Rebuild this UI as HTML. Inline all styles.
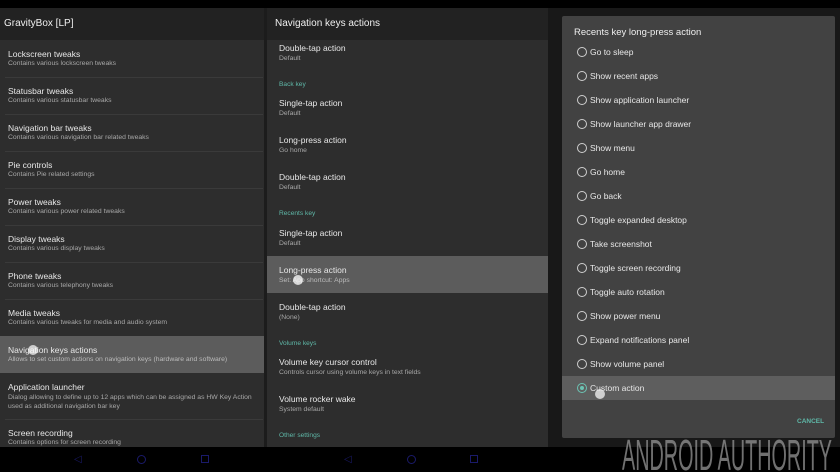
<!DOCTYPE html>
<html><head><meta charset="utf-8"><style>
*{margin:0;padding:0;box-sizing:border-box}
body{width:840px;height:472px;background:#000;position:relative;overflow:hidden;font-family:"Liberation Sans",sans-serif;color:#e6e6e6}
.a{position:absolute;white-space:nowrap}
.t{font-size:8.5px;color:#e8e8e8}
.s{font-size:6.8px;color:#a8a8a8}
.h{font-size:10px;color:#f0f0f0}
.c{font-size:6.6px;color:#5fb8a8}
.sep{position:absolute;height:1px;background:#3a3a3a}
.r{position:absolute;width:10px;height:10px;border:1.3px solid #cfcfcf;border-radius:50%}
.o{font-size:8.5px;color:#e8e8e8}
</style></head><body>
<div class="a" style="left:0;top:0;width:840px;height:8px;background:#000"></div>
<!-- panel 1 -->
<div class="a" style="left:0;top:8px;width:264px;height:32px;background:#222"></div>
<div class="a" style="left:0;top:40px;width:264px;height:407px;background:#2d2d2d"></div>
<div class="a" style="left:264px;top:8px;width:3px;height:439px;background:#1c1c1c"></div>
<div class="a h" style="left:4px;top:18px">GravityBox [LP]</div>
<div class="a" style="left:0;top:336px;width:264px;height:37px;background:#5c5c5c"></div>
<div class="a t" style="left:8px;top:49px">Lockscreen tweaks</div><div class="a s" style="left:8px;top:60px">Contains various lockscreen tweaks</div>
<div class="a t" style="left:8px;top:86px">Statusbar tweaks</div><div class="a s" style="left:8px;top:97px">Contains various statusbar tweaks</div>
<div class="a t" style="left:8px;top:123px">Navigation bar tweaks</div><div class="a s" style="left:8px;top:134px">Contains various navigation bar related tweaks</div>
<div class="a t" style="left:8px;top:160px">Pie controls</div><div class="a s" style="left:8px;top:171px">Contains Pie related settings</div>
<div class="a t" style="left:8px;top:197px">Power tweaks</div><div class="a s" style="left:8px;top:208px">Contains various power related tweaks</div>
<div class="a t" style="left:8px;top:234px">Display tweaks</div><div class="a s" style="left:8px;top:245px">Contains various display tweaks</div>
<div class="a t" style="left:8px;top:271px">Phone tweaks</div><div class="a s" style="left:8px;top:282px">Contains various telephony tweaks</div>
<div class="a t" style="left:8px;top:308px">Media tweaks</div><div class="a s" style="left:8px;top:319px">Contains various tweaks for media and audio system</div>
<div class="a t" style="left:8px;top:345px">Navigation keys actions</div><div class="a s" style="left:8px;top:356px;color:#bbb">Allows to set custom actions on navigation keys (hardware and software)</div>
<div class="a" style="left:28px;top:345px;width:10px;height:10px;border-radius:50%;background:rgba(255,255,255,.7)"></div>
<div class="a t" style="left:8px;top:382px">Application launcher</div><div class="a s" style="left:8px;top:393px;line-height:9px">Dialog allowing to define up to 12 apps which can be assigned as HW Key Action<br>used as additional navigation bar key</div>
<div class="a t" style="left:8px;top:428px">Screen recording</div><div class="a s" style="left:8px;top:439px">Contains options for screen recording</div>
<div class="sep" style="left:5px;top:77px;width:258px"></div><div class="sep" style="left:5px;top:114px;width:258px"></div><div class="sep" style="left:5px;top:151px;width:258px"></div><div class="sep" style="left:5px;top:188px;width:258px"></div><div class="sep" style="left:5px;top:225px;width:258px"></div><div class="sep" style="left:5px;top:262px;width:258px"></div><div class="sep" style="left:5px;top:299px;width:258px"></div><div class="sep" style="left:5px;top:419px;width:258px"></div>
<!-- panel 2 -->
<div class="a" style="left:267px;top:8px;width:281px;height:32px;background:#222"></div>
<div class="a" style="left:267px;top:40px;width:281px;height:407px;background:#2d2d2d"></div>
<div class="a h" style="left:275px;top:18px">Navigation keys actions</div>
<div class="a" style="left:267px;top:256px;width:281px;height:37px;background:#5c5c5c"></div>
<div class="a t" style="left:279px;top:43px">Double-tap action</div><div class="a s" style="left:279px;top:55px">Default</div>
<div class="a c" style="left:279px;top:81px">Back key</div>
<div class="a t" style="left:279px;top:98px">Single-tap action</div><div class="a s" style="left:279px;top:110px">Default</div>
<div class="a t" style="left:279px;top:135px">Long-press action</div><div class="a s" style="left:279px;top:147px">Go home</div>
<div class="a t" style="left:279px;top:172px">Double-tap action</div><div class="a s" style="left:279px;top:184px">Default</div>
<div class="a c" style="left:279px;top:210px">Recents key</div>
<div class="a t" style="left:279px;top:228px">Single-tap action</div><div class="a s" style="left:279px;top:240px">Default</div>
<div class="a t" style="left:279px;top:265px">Long-press action</div><div class="a s" style="left:279px;top:277px;color:#bbb">Set: App shortcut: Apps</div>
<div class="a" style="left:293px;top:275px;width:10px;height:10px;border-radius:50%;background:rgba(255,255,255,.75)"></div>
<div class="a t" style="left:279px;top:302px">Double-tap action</div><div class="a s" style="left:279px;top:314px">(None)</div>
<div class="a c" style="left:279px;top:340px">Volume keys</div>
<div class="a t" style="left:279px;top:357px">Volume key cursor control</div><div class="a s" style="left:279px;top:369px">Controls cursor using volume keys in text fields</div>
<div class="a t" style="left:279px;top:394px">Volume rocker wake</div><div class="a s" style="left:279px;top:406px">System default</div>
<div class="a c" style="left:279px;top:432px">Other settings</div>
<!-- panel 3 -->
<div class="a" style="left:548px;top:8px;width:292px;height:439px;background:#181818"></div>
<div class="a" style="left:562px;top:16px;width:273px;height:422px;background:#424242;border-radius:2px"></div>
<div class="a" style="left:574px;top:27px;font-size:9.5px;color:#eee">Recents key long-press action</div>
<div class="a" style="left:562px;top:376px;width:273px;height:24px;background:#5e5e5e"></div>
<div id="opts"></div>
<div class="a" style="left:797px;top:418px;font-size:6.5px;font-weight:bold;color:#5fb8a8">CANCEL</div>
<!-- nav bar -->
<div class="a" style="left:0;top:447px;width:840px;height:25px;background:#000"></div>
<div class="a" style="left:74px;top:454px;font-size:10px;color:#1a1a6a">◁</div>
<div class="a" style="left:137px;top:455px;width:9px;height:9px;border:1.3px solid #1a1a6a;border-radius:50%"></div>
<div class="a" style="left:201px;top:455px;width:8px;height:8px;border:1.3px solid #1a1a6a"></div>
<div class="a" style="left:344px;top:454px;font-size:10px;color:#1a1a6a">◁</div>
<div class="a" style="left:407px;top:455px;width:9px;height:9px;border:1.3px solid #1a1a6a;border-radius:50%"></div>
<div class="a" style="left:470px;top:455px;width:8px;height:8px;border:1.3px solid #1a1a6a"></div>
<svg class="a" style="left:0;top:0" width="840" height="472"><text x="622" y="470" font-family="Liberation Sans, sans-serif" font-size="44" fill="rgba(150,150,150,0.75)" textLength="210" lengthAdjust="spacingAndGlyphs">ANDROID AUTHORITY</text></svg>
<script>
var o=["Go to sleep","Show recent apps","Show application launcher","Show launcher app drawer","Show menu","Go home","Go back","Toggle expanded desktop","Take screenshot","Toggle screen recording","Toggle auto rotation","Show power menu","Expand notifications panel","Show volume panel","Custom action"],h="";
o.forEach(function(t,i){var y=52+i*24;var sel=i==14;
h+='<div class="r" style="left:577px;top:'+(y-5)+'px;'+(sel?'border-color:#6cc3b3':'')+'"></div>';
if(sel)h+='<div class="a" style="left:580px;top:'+(y-2)+'px;width:4px;height:4px;border-radius:50%;background:#6cc3b3"></div><div class="a" style="left:595px;top:'+(y+1)+'px;width:10px;height:10px;border-radius:50%;background:rgba(255,255,255,.7)"></div>';
h+='<div class="a o" style="left:590px;top:'+(y-5)+'px">'+t+'</div>';});
document.getElementById("opts").innerHTML=h;
</script>
</body></html>
